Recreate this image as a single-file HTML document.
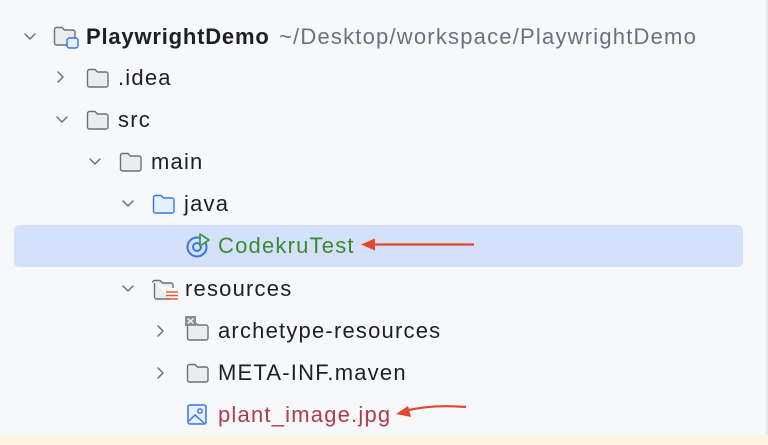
<!DOCTYPE html>
<html><head><meta charset="utf-8"><style>
html,body{margin:0;padding:0}
body{width:768px;height:445px;background:#f7f8fa;position:relative;overflow:hidden;font-family:"Liberation Sans",sans-serif;font-size:22px;letter-spacing:1.2px;color:#1e1f22}
.r{position:absolute;left:0;height:42px;width:768px}
.t{position:absolute;top:50%;transform:translateY(-50%);white-space:nowrap;line-height:26px}
svg{position:absolute}
.hl{position:absolute;left:14px;top:225px;width:729px;height:42px;background:#d5e0fb;border-radius:5px}
.yb{position:absolute;left:0;top:435px;width:768px;height:10px;background:#fdf5e1}
.edge{position:absolute;left:766px;top:0;width:2px;height:435px;background:#e6e7ea}
</style></head><body>
<div class="hl"></div>
<div class="yb"></div>
<div class="edge"></div>
<svg width="768" height="445" style="left:0;top:0">
<defs>
<g id="fold"><path d="M1.5 3.5 a2 2 0 0 1 2-2 h5.5 l2.5 2.5 h8.5 a2 2 0 0 1 2 2 v11 a2 2 0 0 1 -2 2 h-16.5 a2 2 0 0 1 -2-2z" fill="#ebecf0" stroke="#6c707e" stroke-width="1.4"/></g>
</defs>
<g fill="none" stroke="#6c707e" stroke-width="1.5" stroke-linecap="round" stroke-linejoin="round">
<path d="M25 34 l5 5 l5-5"/>
<path d="M58 72 l5 5 l-5 5"/>
<path d="M57 117 l5 5 l5-5"/>
<path d="M90 159 l5 5 l5-5"/>
<path d="M123 201 l5 5 l5-5"/>
<path d="M123 286 l5 5 l5-5"/>
<path d="M158 326 l5 5 l-5 5"/>
<path d="M158 368 l5 5 l-5 5"/>
</g>
<use href="#fold" x="53" y="26"/>
<rect x="67" y="38" width="11" height="10" rx="2.5" fill="#e8effd" stroke="#3574f0" stroke-width="1.4"/>
<use href="#fold" x="86" y="68"/>
<use href="#fold" x="86" y="110"/>
<use href="#fold" x="119" y="152"/>
<path d="M153.5 197.5 a2 2 0 0 1 2-2 h5.5 l2.5 2.5 h8.5 a2 2 0 0 1 2 2 v11 a2 2 0 0 1 -2 2 h-16.5 a2 2 0 0 1 -2-2z" fill="#e8effd" stroke="#3574f0" stroke-width="1.4"/>
<circle cx="197" cy="247" r="9.5" fill="none" stroke="#3574f0" stroke-width="2"/>
<circle cx="197" cy="247" r="4" fill="none" stroke="#3574f0" stroke-width="2"/>
<path d="M200 234 l9 6 l-9 6z" fill="#d5e0fb" stroke="#3b9c3b" stroke-width="1.7" stroke-linejoin="round"/>
<path d="M152.5 282.5 a2 2 0 0 1 2-2 h5.5 l2.5 2.5 h8.5 a2 2 0 0 1 2 2 v3 M170 299 h-13.5 a2 2 0 0 1 -2-2 v-14" fill="#ebecf0" stroke="#6c707e" stroke-width="1.4"/>
<g stroke="#e55b3c" stroke-width="1.6"><path d="M166 292 h12 M166 295.5 h12 M166 299 h12"/></g>
<use href="#fold" x="186" y="321"/>
<rect x="185" y="316" width="11" height="10" fill="#8a8c93"/>
<path d="M187.5 318.5 l6 5 M193.5 318.5 l-6 5" stroke="#ebecf0" stroke-width="1.5"/>
<use href="#fold" x="186" y="363"/>
<rect x="188" y="405" width="18" height="19" rx="2" fill="#e8effd" stroke="#3574f0" stroke-width="1.5"/>
<circle cx="200" cy="411" r="2.2" fill="none" stroke="#3574f0" stroke-width="1.4"/>
<path d="M189 421 l6-6 l9 8" fill="none" stroke="#3574f0" stroke-width="1.4"/>
<path d="M474 244.5 h-105" stroke="#e5462b" stroke-width="2.2"/>
<path d="M361 244.5 l14-6 v12z" fill="#e5462b"/>
<path d="M466 407 C440 405 420 407 405 411" fill="none" stroke="#e5462b" stroke-width="2.2"/>
<path d="M396 414 l12-8 l3 11z" fill="#e5462b"/>
</svg>
<div class="r" style="top:16px"><span class="t" style="left:86px;font-weight:bold;letter-spacing:0.8px">PlaywrightDemo</span><span class="t" style="left:279px;color:#6c707e">~/Desktop/workspace/PlaywrightDemo</span></div>
<div class="r" style="top:57px"><span class="t" style="left:118px">.idea</span></div>
<div class="r" style="top:99px"><span class="t" style="left:118px">src</span></div>
<div class="r" style="top:141px"><span class="t" style="left:151px">main</span></div>
<div class="r" style="top:183px"><span class="t" style="left:184px">java</span></div>
<div class="r" style="top:225px"><span class="t" style="left:218px;color:#3b8a2f">CodekruTest</span></div>
<div class="r" style="top:268px"><span class="t" style="left:185px">resources</span></div>
<div class="r" style="top:310px"><span class="t" style="left:218px">archetype-resources</span></div>
<div class="r" style="top:352px"><span class="t" style="left:218px">META-INF.maven</span></div>
<div class="r" style="top:394px"><span class="t" style="left:218px;color:#b13a48">plant_image.jpg</span></div>
</body></html>
